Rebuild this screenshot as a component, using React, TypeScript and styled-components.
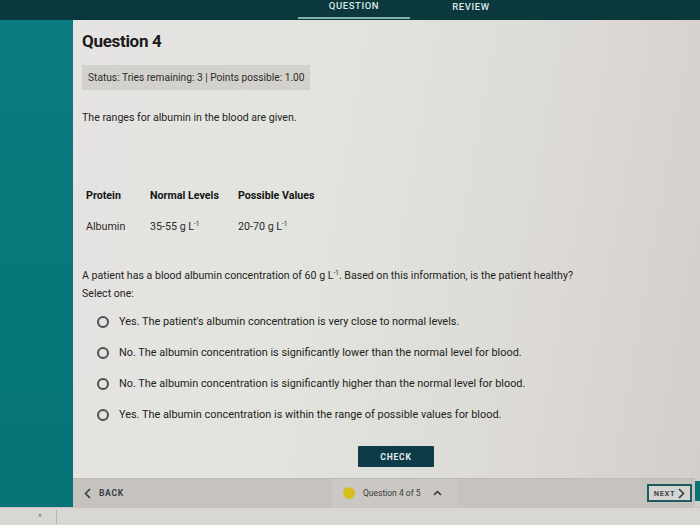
import React, { useState } from "react";
import styled, { createGlobalStyle } from "styled-components";

const GlobalStyle = createGlobalStyle`
  html, body {
    margin: 0;
    padding: 0;
    width: 700px;
    height: 525px;
    overflow: hidden;
    font-family: Roboto, "Liberation Sans", sans-serif;
    background: #d8d6d3;
  }
`;

const Screen = styled.div`
  display: grid;
  grid-template-rows: 20px 1fr 18px;
  width: 700px;
  height: 525px;
`;

const TopBar = styled.div`
  display: flex;
  align-items: flex-start;
  background: #0b383d;
  padding-left: 298px;
  overflow: hidden;
`;

const Tab = styled.div<{ $active?: boolean; $width: number }>`
  width: ${(p) => p.$width}px;
  height: 17px;
  display: flex;
  justify-content: center;
  align-items: flex-start;
  font-size: 9.5px;
  line-height: 11px;
  font-weight: 500;
  letter-spacing: 0.6px;
  color: #dfe8e8;
  border-bottom: ${(p) => (p.$active ? "2px solid #7fb3b0" : "none")};
  margin-top: ${(p) => (p.$active ? "0" : "1px")};
  margin-right: 26px;
`;

const Body = styled.div`
  display: grid;
  grid-template-columns: 73px 1fr;
  min-height: 0;
`;

const Sidebar = styled.div`
  background: linear-gradient(180deg, #0a7b7e 0%, #067477 100%);
`;

const Main = styled.div`
  display: grid;
  grid-template-rows: 1fr 29px;
  background: linear-gradient(100deg, #e6e3e3 0%, #e1e4dc 40%, #dcd9d5 75%, #d2ceca 100%);
  min-height: 0;
`;

const Content = styled.div`
  padding: 11px 0 0 9px;
  color: #1b1b1b;
`;

const Heading = styled.h1`
  margin: 0;
  font-size: 17px;
  font-weight: 700;
  line-height: 20px;
  letter-spacing: -0.3px;
`;

const Status = styled.div`
  margin-top: 14px;
  width: 228px;
  height: 25px;
  box-sizing: border-box;
  padding: 0 6px;
  display: flex;
  align-items: center;
  font-size: 10.2px;
  color: #2c2c2c;
  background: #d2d1cb;
  white-space: nowrap;
`;

const Text = styled.p<{ $top: number }>`
  margin: ${(p) => p.$top}px 0 0;
  font-size: 10.6px;
  line-height: 14px;
  color: #1e1e1e;
`;

const Table = styled.div`
  margin: 64px 0 0 4px;
  display: grid;
  grid-template-columns: 64px 88px 120px;
  row-gap: 18px;
  font-size: 10.7px;
`;

const Th = styled.div`
  font-weight: 700;
  color: #151515;
`;

const Td = styled.div`
  color: #2a2a2a;
`;

const Options = styled.div`
  margin: 14px 0 0 15px;
  display: flex;
  flex-direction: column;
  gap: 17px;
`;

const Option = styled.label`
  display: flex;
  align-items: center;
  gap: 10px;
  font-size: 10.9px;
  line-height: 14px;
  color: #222;
  cursor: pointer;
`;

const Radio = styled.span<{ $checked: boolean }>`
  width: 12px;
  height: 12px;
  box-sizing: border-box;
  border-radius: 50%;
  border: 2px solid #4f4f4f;
  background: ${(p) => (p.$checked ? "radial-gradient(#4f4f4f 35%, transparent 40%)" : "transparent")};
  flex-shrink: 0;
`;

const CheckButton = styled.button`
  margin: 24px 0 0 276px;
  width: 76px;
  height: 21px;
  border: none;
  border-radius: 1px;
  background: #0d3b49;
  color: #e8eef0;
  font-family: Roboto, "Liberation Sans", sans-serif;
  font-size: 8.5px;
  font-weight: 700;
  letter-spacing: 0.8px;
  cursor: pointer;
`;

const NavBar = styled.div`
  display: flex;
  align-items: center;
  background: #c6c3bf;
  border-top: 1px solid #bdbab6;
  margin-right: 5px;
  position: relative;
`;

const BackButton = styled.div`
  display: flex;
  align-items: center;
  gap: 8px;
  padding-left: 11px;
  width: 248px;
  font-size: 8.5px;
  font-weight: 700;
  letter-spacing: 0.7px;
  color: #35424a;
`;

const Progress = styled.div`
  display: flex;
  align-items: center;
  height: 100%;
  width: 126px;
  background: #cbc8c4;
  padding-left: 11px;
  box-sizing: border-box;
  font-size: 8.5px;
  color: #3a3a3a;
`;

const Dot = styled.span`
  width: 12px;
  height: 12px;
  border-radius: 50%;
  background: #d9be1c;
  margin-right: 8px;
`;

const Caret = styled.span`
  margin-left: 12px;
  display: flex;
`;

const NextButton = styled.div`
  margin-left: auto;
  margin-right: 3px;
  width: 45px;
  height: 18px;
  box-sizing: border-box;
  border: 2px solid #1f5a5e;
  display: flex;
  align-items: center;
  justify-content: center;
  gap: 3px;
  font-size: 7.5px;
  font-weight: 700;
  letter-spacing: 0.6px;
  color: #3b4a50;
  background: #d6d4d0;
`;

const EdgeStrip = styled.span`
  position: absolute;
  right: -5px;
  top: 2px;
  width: 5px;
  height: 20px;
  background: #0a7376;
`;

const Taskbar = styled.div`
  display: flex;
  align-items: center;
  background: #d9d7d4;
  border-top: 1px solid #c9c6c2;
  padding-left: 38px;
  font-size: 9px;
  color: #777;
`;

const Divider = styled.span`
  width: 1px;
  height: 14px;
  background: #b8b5b1;
  margin-left: 14px;
`;

const Sup = styled.sup`
  font-size: 6.5px;
  vertical-align: 4px;
  line-height: 0;
`;

const options = [
  "Yes. The patient's albumin concentration is very close to normal levels.",
  "No. The albumin concentration is significantly lower than the normal level for blood.",
  "No. The albumin concentration is significantly higher than the normal level for blood.",
  "Yes. The albumin concentration is within the range of possible values for blood.",
];

const ChevronLeft = () => (
  <svg width="7" height="11" viewBox="0 0 7 11">
    <path d="M6 1 L1.5 5.5 L6 10" fill="none" stroke="#2f3c44" strokeWidth="1.6" />
  </svg>
);

const ChevronRight = () => (
  <svg width="7" height="11" viewBox="0 0 7 11">
    <path d="M1 1 L5.5 5.5 L1 10" fill="none" stroke="#2f3c44" strokeWidth="1.6" />
  </svg>
);

const ChevronUp = () => (
  <svg width="9" height="6" viewBox="0 0 9 6">
    <path d="M1 5 L4.5 1.5 L8 5" fill="none" stroke="#333" strokeWidth="1.5" />
  </svg>
);

export default function App() {
  const [selected, setSelected] = useState<number | null>(null);

  return (
    <>
      <GlobalStyle />
      <Screen>
        <TopBar>
          <Tab $active $width={112}>QUESTION</Tab>
          <Tab $width={70}>REVIEW</Tab>
        </TopBar>
        <Body>
          <Sidebar />
          <Main>
            <Content>
              <Heading>Question 4</Heading>
              <Status>Status: Tries remaining: 3 | Points possible: 1.00</Status>
              <Text $top={21}>The ranges for albumin in the blood are given.</Text>
              <Table>
                <Th>Protein</Th>
                <Th>Normal Levels</Th>
                <Th>Possible Values</Th>
                <Td>Albumin</Td>
                <Td>
                  35-55 g L<Sup>-1</Sup>
                </Td>
                <Td>
                  20-70 g L<Sup>-1</Sup>
                </Td>
              </Table>
              <Text $top={36}>
                A patient has a blood albumin concentration of 60 g L<Sup>-1</Sup>. Based on this
                information, is the patient healthy?
              </Text>
              <Text $top={4}>Select one:</Text>
              <Options>
                {options.map((o, i) => (
                  <Option key={i} onClick={() => setSelected(i)}>
                    <Radio $checked={selected === i} />
                    {o}
                  </Option>
                ))}
              </Options>
              <CheckButton>CHECK</CheckButton>
            </Content>
            <NavBar>
              <BackButton>
                <ChevronLeft />
                BACK
              </BackButton>
              <Progress>
                <Dot />
                Question 4 of 5
                <Caret>
                  <ChevronUp />
                </Caret>
              </Progress>
              <NextButton>
                NEXT
                <ChevronRight />
              </NextButton>
              <EdgeStrip />
            </NavBar>
          </Main>
        </Body>
        <Taskbar>
          ^
          <Divider />
        </Taskbar>
      </Screen>
    </>
  );
}
